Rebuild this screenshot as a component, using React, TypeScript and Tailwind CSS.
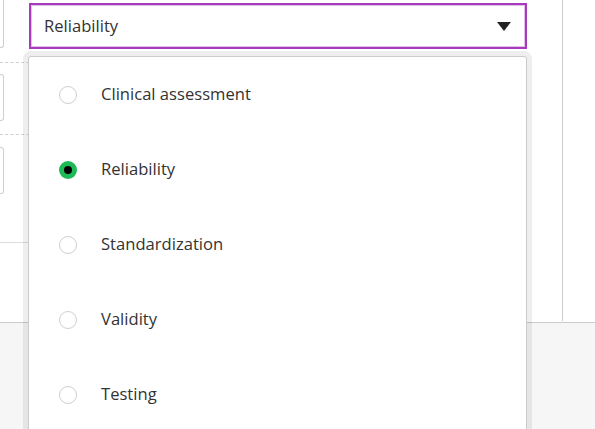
import React from "react";

const options = [
  "Clinical assessment",
  "Reliability",
  "Standardization",
  "Validity",
  "Testing",
];

function Radio({ checked }: { checked: boolean }) {
  if (checked) {
    return (
      <span className="flex h-[18px] w-[18px] shrink-0 items-center justify-center rounded-full bg-[#1db954]">
        <span className="h-[8px] w-[8px] rounded-full bg-black" />
      </span>
    );
  }
  return (
    <span className="h-[18px] w-[18px] shrink-0 rounded-full border border-[#cfcfcf] bg-white" />
  );
}

export default function App() {
  return (
    <div
      className="relative flex h-[429px] w-[595px] flex-col overflow-hidden bg-white text-[#333]"
      style={{ fontFamily: '"Open Sans", "Noto Sans", sans-serif' }}
    >
      <div className="flex h-[322px] shrink-0">
        <div className="flex h-[321px] w-[563px] flex-col border-r border-[#cbcbcb]">
          {/* Row 1 */}
          <div className="flex items-start">
            <div className="h-[48px] w-[4px] rounded-br-[3px] border-b border-r border-[#cfcfcf]" />
            <div className="relative ml-[25px] mt-[3px]">
              <div className="flex h-[46px] w-[498px] items-center justify-between border-2 border-[#a63bbb] pl-[13px] pr-[14px] shadow-[inset_0_0_0_1px_#e2bde9]">
                <span className="text-[16.6px] leading-none">Reliability</span>
                <svg width="14" height="9" viewBox="0 0 14 9">
                  <path d="M0 0 H14 L7 9 Z" fill="#222" />
                </svg>
              </div>
              {/* Dropdown menu */}
              <div className="absolute left-[-1px] top-[53px] z-10 w-[499px] rounded-[3px] border border-[#cbcbcb] bg-white shadow-[0_0_0_5px_rgba(0,0,0,0.065)]">
                {options.map((o) => (
                  <div key={o} className="flex h-[75px] items-center gap-[24px] pl-[30px]">
                    <Radio checked={o === "Reliability"} />
                    <span className="text-[16.6px] leading-none text-[#333]">{o}</span>
                  </div>
                ))}
                <div className="h-[40px]" />
              </div>
            </div>
          </div>
          <div className="mt-[13px] w-[40px] border-t border-dashed border-[#cfcfcf]" />
          {/* Row 2 */}
          <div className="mt-[11px] h-[47px] w-[4px] rounded-r-[3px] border border-l-0 border-[#cfcfcf]" />
          <div className="mt-[13px] w-[40px] border-t border-dashed border-[#cfcfcf]" />
          {/* Row 3 */}
          <div className="mt-[12px] h-[47px] w-[4px] rounded-r-[3px] border border-l-0 border-[#cfcfcf]" />
          <div className="mt-[48px] w-[40px] border-t border-[#dcdcdc]" />
        </div>
        <div className="flex-1" />
      </div>
      <div className="flex-1 border-t border-[#cbcbcb] bg-[#f6f6f6]" />
    </div>
  );
}
